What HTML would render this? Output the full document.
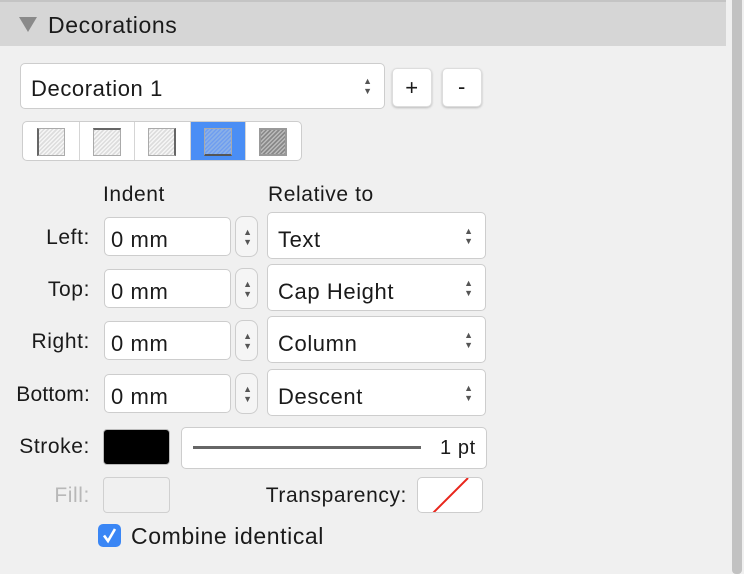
<!DOCTYPE html>
<html><head><style>
*{box-sizing:border-box;margin:0;padding:0}
body{width:744px;height:574px;background:#f0f0f0;font-family:"Liberation Sans",sans-serif;color:#1a1a1a;position:relative;overflow:hidden;font-size:22px;letter-spacing:0.6px}
.a{position:absolute}
.hdr{left:0;top:0;width:726px;height:46px;background:#d6d6d6;border-top:2px solid #c4c4c4}
.sb{left:732px;top:0;width:10px;height:574px;background:#c2c2c2;border-radius:0 0 4px 4px}
.box{background:#fff;border:1.5px solid #cdcdcd;border-radius:5px}
.lbl{text-align:right;width:90px;left:0}
.arr{position:absolute;right:12px;top:50%;transform:translateY(-50%);font-size:9px;line-height:10px;color:#555;text-align:center;letter-spacing:0}
.stp{width:23px;height:41px;border:1.5px solid #cdcdcd;border-radius:8px;background:#f5f5f5}
.seg{width:56px;height:40px;border-right:1.5px solid #d5d5d5;display:flex;align-items:center;justify-content:center}
.ic{width:28px;height:28px;border:1px solid #aaa;background:repeating-linear-gradient(135deg,#ddd 0 1.5px,#f6f6f6 1.5px 3px)}
</style></head><body>
<div class="a hdr"></div>
<div class="a" style="left:19px;top:17px;width:0;height:0;border-left:9px solid transparent;border-right:9px solid transparent;border-top:15px solid #8a8a8a"></div>
<div class="a" style="left:48px;top:12px;font-size:23px">Decorations</div>
<div class="a sb"></div>

<div class="a box" style="left:20px;top:63px;width:365px;height:46px"><span class="a" style="left:10px;top:12px">Decoration 1</span><div class="arr">▲<br>▼</div></div>
<div class="a box" style="left:392px;top:68px;width:40px;height:39px;text-align:center;line-height:38px;font-size:22px;border-color:#ddd;box-shadow:0 1px 2px #bbb">+</div>
<div class="a box" style="left:442px;top:68px;width:40px;height:39px;text-align:center;line-height:36px;font-size:22px;border-color:#ddd;box-shadow:0 1px 2px #bbb">-</div>

<div class="a box" style="left:22px;top:121px;width:280px;height:40px;display:flex;overflow:hidden">
<div class="seg" style="width:58px"><div class="ic" style="border-left:2px solid #666"></div></div>
<div class="seg"><div class="ic" style="border-top:2px solid #666"></div></div>
<div class="seg"><div class="ic" style="border-right:2px solid #666"></div></div>
<div class="seg" style="background:#4a8ef5"><div class="ic" style="border-bottom:2px solid #555;background:repeating-linear-gradient(135deg,#8ab0e8 0 1.5px,#6f9ef0 1.5px 3px)"></div></div>
<div class="seg" style="border:none"><div class="ic" style="border:2px solid #999;background:repeating-linear-gradient(135deg,#888 0 1.5px,#bbb 1.5px 3px)"></div></div>
</div>

<div class="a" style="left:103px;top:183px;font-size:21px">Indent</div>
<div class="a" style="left:268px;top:183px;font-size:21px">Relative to</div>

<div class="a lbl" style="top:226px;font-size:21px">Left:</div>
<div class="a box" style="left:104px;top:217px;width:127px;height:39px"><span class="a" style="left:6px;top:9px">0 mm</span></div>
<div class="a stp" style="left:235px;top:216px"><div class="arr" style="right:5px">▲<br>▼</div></div>
<div class="a box" style="left:267px;top:212px;width:219px;height:47px"><span class="a" style="left:10px;top:14px">Text</span><div class="arr">▲<br>▼</div></div>

<div class="a lbl" style="top:278px;font-size:21px">Top:</div>
<div class="a box" style="left:104px;top:269px;width:127px;height:39px"><span class="a" style="left:6px;top:9px">0 mm</span></div>
<div class="a stp" style="left:235px;top:268px"><div class="arr" style="right:5px">▲<br>▼</div></div>
<div class="a box" style="left:267px;top:264px;width:219px;height:47px"><span class="a" style="left:10px;top:14px">Cap Height</span><div class="arr">▲<br>▼</div></div>

<div class="a lbl" style="top:330px;font-size:21px">Right:</div>
<div class="a box" style="left:104px;top:321px;width:127px;height:39px"><span class="a" style="left:6px;top:9px">0 mm</span></div>
<div class="a stp" style="left:235px;top:320px"><div class="arr" style="right:5px">▲<br>▼</div></div>
<div class="a box" style="left:267px;top:316px;width:219px;height:47px"><span class="a" style="left:10px;top:14px">Column</span><div class="arr">▲<br>▼</div></div>

<div class="a lbl" style="top:383px;font-size:21px;letter-spacing:0.2px">Bottom:</div>
<div class="a box" style="left:104px;top:374px;width:127px;height:39px"><span class="a" style="left:6px;top:9px">0 mm</span></div>
<div class="a stp" style="left:235px;top:373px"><div class="arr" style="right:5px">▲<br>▼</div></div>
<div class="a box" style="left:267px;top:369px;width:219px;height:47px"><span class="a" style="left:10px;top:14px">Descent</span><div class="arr">▲<br>▼</div></div>

<div class="a lbl" style="top:435px;font-size:21px">Stroke:</div>
<div class="a" style="left:103px;top:429px;width:67px;height:36px;background:#000;border:1.5px solid #bbb;border-radius:4px"></div>
<div class="a box" style="left:181px;top:427px;width:306px;height:42px"><div class="a" style="left:11px;top:18px;width:228px;height:3px;background:#666"></div><span class="a" style="left:258px;top:9px;font-size:20px">1 pt</span></div>

<div class="a lbl" style="top:484px;font-size:21px;color:#b8b8b8">Fill:</div>
<div class="a" style="left:103px;top:477px;width:67px;height:36px;border:1.5px solid #d0d0d0;border-radius:4px"></div>
<div class="a" style="left:200px;top:484px;width:207px;text-align:right;font-size:21px">Transparency:</div>
<div class="a box" style="left:417px;top:477px;width:66px;height:36px;overflow:hidden"><svg width="66" height="36" style="position:absolute;left:0;top:0"><line x1="14" y1="36" x2="50" y2="0" stroke="#e8261c" stroke-width="2"/></svg></div>

<div class="a" style="left:98px;top:524px;width:23px;height:23px;background:#3a86f5;border-radius:5px"><svg width="23" height="23"><path d="M6 11.5 L10 17 L17 5" stroke="#fff" stroke-width="2.6" fill="none"/></svg></div>
<div class="a" style="left:131px;top:523px;font-size:23px">Combine identical</div>
</body></html>
